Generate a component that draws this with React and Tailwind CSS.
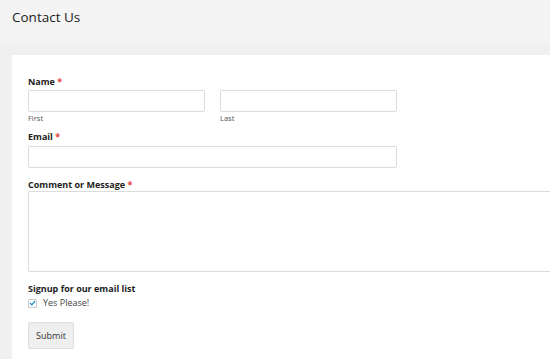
export default function App() {
  return (
    <div className="min-h-[359px] bg-[#f0f0f0] text-[#333]" style={{ fontFamily: '"Open Sans", sans-serif' }}>
      <div className="h-[44px] bg-[#f4f4f4] px-[12px] pt-[7px]">
        <h1 className="text-[13.5px] text-[#222] leading-[20px]">Contact Us</h1>
      </div>
      <div className="pt-[11px] pl-[12px]">
        <div className="bg-white pl-[16px] pt-[20px] pb-[12px] w-[560px]">
          <div className="text-[9px] font-bold text-[#222] leading-[14px]">
            Name <span className="text-[#e53e3e]">*</span>
          </div>
          <div className="flex gap-[15px] mt-[1px]">
            <div>
              <div className="w-[177px] h-[22px] border border-[#dcdcdc] rounded-[2px]" />
              <div className="text-[7.5px] text-[#555] mt-[1px]">First</div>
            </div>
            <div>
              <div className="w-[177px] h-[22px] border border-[#dcdcdc] rounded-[2px]" />
              <div className="text-[7.5px] text-[#555] mt-[1px]">Last</div>
            </div>
          </div>
          <div className="text-[9px] font-bold text-[#222] leading-[14px] mt-[6px]">
            Email <span className="text-[#e53e3e]">*</span>
          </div>
          <div className="w-[369px] h-[22px] border border-[#dcdcdc] rounded-[2px] mt-[2px]" />
          <div className="text-[9px] font-bold text-[#222] leading-[14px] mt-[10px]">
            Comment or Message <span className="text-[#e53e3e]">*</span>
          </div>
          <div className="w-[540px] h-[81px] border border-[#dcdcdc] border-r-0 rounded-l-[2px] -mt-[1px]" />
          <div className="text-[9px] font-bold text-[#222] leading-[14px] mt-[10px]">Signup for our email list</div>
          <div className="flex items-center gap-[6px]">
            <div className="w-[9px] h-[9px] border border-[#ccc] rounded-[1px] flex items-center justify-center bg-white">
              <svg width="8" height="8" viewBox="0 0 10 10">
                <path d="M1.5 5.2 L4 7.6 L8.8 2.2" fill="none" stroke="#1e8cbe" strokeWidth="1.8" />
              </svg>
            </div>
            <span className="text-[9px] text-[#444] leading-[14px]">Yes Please!</span>
          </div>
          <button className="mt-[12px] w-[46px] h-[27px] bg-[#efefef] border border-[#dedede] rounded-[2px] text-[9px] text-[#333]">
            Submit
          </button>
        </div>
      </div>
    </div>
  );
}
